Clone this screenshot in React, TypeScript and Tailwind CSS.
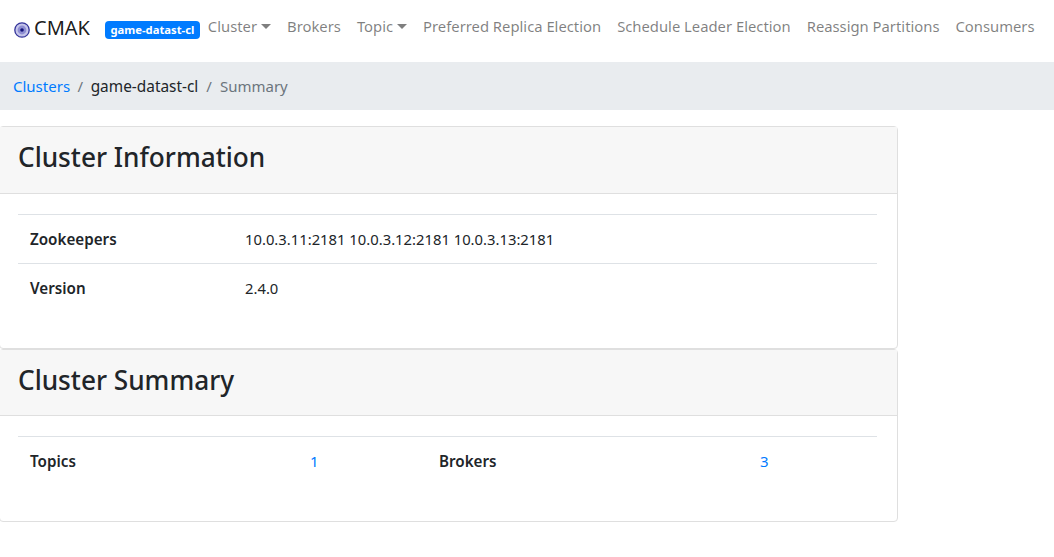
import React from 'react';

const font = "font-['Noto_Sans','Open_Sans',sans-serif]";

function Caret() {
  return <span className="ml-[4px] mb-[3px] inline-block border-x-[5px] border-t-[5px] border-x-transparent border-t-current align-middle" />;
}

function NavItem({ label, caret }: { label: string; caret?: boolean }) {
  return (
    <a className="px-2 text-[rgba(0,0,0,0.5)] whitespace-nowrap">
      {label}
      {caret && <Caret />}
    </a>
  );
}

function Logo() {
  return (
    <svg width="16" height="16" viewBox="0 0 16 16" className="shrink-0">
      <circle cx="8" cy="8" r="7.2" fill="#c5c5ea" stroke="#34349a" strokeWidth="1.3" />
      <circle cx="8" cy="8" r="4.4" fill="#8e8ed2" />
      <circle cx="8" cy="8" r="1.8" fill="#14147a" />
    </svg>
  );
}

function Card({ title, className, headClass, children }: { title: string; className: string; headClass: string; children: React.ReactNode }) {
  return (
    <div className={`-ml-[1px] w-[899px] rounded-[4px] border border-[#dfdfdf] ${className}`}>
      <div className={`border-b border-[#dfdfdf] bg-[#f7f7f7] pl-[18px] pt-[12px] text-[26.2px] leading-[36px] font-medium text-[#212529] ${headClass}`}>
        {title}
      </div>
      <div className="pl-[18px] pr-[20px] pt-[20px]">{children}</div>
    </div>
  );
}

export default function App() {
  return (
    <div className={`${font} h-[557px] w-[1054px] overflow-hidden bg-white text-[15px] text-[#212529]`}>
      <nav className="flex h-[62px] items-start pl-[14px]">
        <a className="mt-[14px] flex items-center gap-[4px] text-[20px] leading-[28px] text-[rgba(0,0,0,0.9)]">
          <span className="mt-[3px]"><Logo /></span>
          CMAK
        </a>
        <span className="ml-[15px] mt-[21px] h-[18px] whitespace-nowrap rounded-[4px] bg-[#007bff] px-[5.5px] text-[11.25px] leading-[18px] font-bold text-white">
          game-datast-cl
        </span>
        <div className="mt-[14px] flex text-[14.8px] leading-[24px]">
          <NavItem label="Cluster" caret />
          <NavItem label="Brokers" />
          <NavItem label="Topic" caret />
          <NavItem label="Preferred Replica Election" />
          <NavItem label="Schedule Leader Election" />
          <NavItem label="Reassign Partitions" />
          <NavItem label="Consumers" />
        </div>
      </nav>

      <div className="mb-[16px] flex h-[48px] items-baseline bg-[#e9ecef] pl-[13px] pt-[12px] leading-[24px]">
        <a className="text-[#007bff]">Clusters</a>
        <span className="px-[7.5px] text-[#6c757d]">/</span>
        <a className="text-[15.4px] text-[#212529]">game-datast-cl</a>
        <span className="px-[8px] text-[#6c757d]">/</span>
        <span className="text-[#6c757d]">Summary</span>
      </div>

      <Card title="Cluster Information" className="h-[223px]" headClass="h-[67px]">
        <div className="flex h-[49px] items-baseline border-t border-[#dee2e6] pl-[12px] pt-[12px] leading-[24px]">
          <b className="w-[215px] text-[15.2px] font-semibold">Zookeepers</b>
          <span className="text-[14.8px]">10.0.3.11:2181 10.0.3.12:2181 10.0.3.13:2181</span>
        </div>
        <div className="flex h-[49px] items-baseline border-t border-[#dee2e6] pl-[12px] pt-[12px] leading-[24px]">
          <b className="w-[215px] text-[15.2px] font-semibold">Version</b>
          <span className="text-[14.8px]">2.4.0</span>
        </div>
      </Card>

      <Card title="Cluster Summary" className="h-[173px]" headClass="h-[66px]">
        <div className="flex h-[49px] items-baseline border-t border-[#dee2e6] pl-[12px] pt-[12px] leading-[24px]">
          <b className="w-[280px] text-[15.2px] font-semibold">Topics</b>
          <a className="w-[129px] text-[#007bff]">1</a>
          <b className="w-[321px] text-[15.2px] font-semibold">Brokers</b>
          <a className="text-[#007bff]">3</a>
        </div>
      </Card>
    </div>
  );
}
